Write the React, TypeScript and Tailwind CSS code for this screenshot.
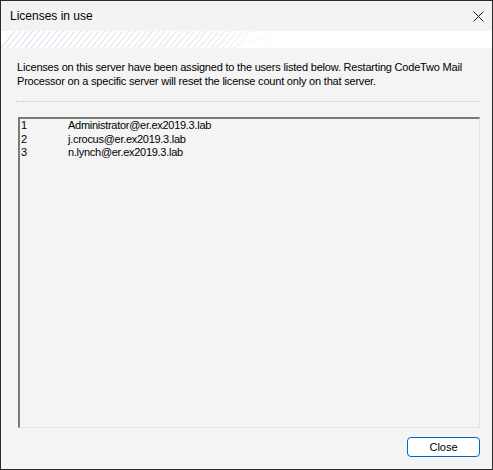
const users = [
  'Administrator@er.ex2019.3.lab',
  'j.crocus@er.ex2019.3.lab',
  'n.lynch@er.ex2019.3.lab',
];

function Banner() {
  const stripes = Array.from({ length: 40 }, (_, i) => i * 6);
  const arcs = Array.from({ length: 14 }, (_, i) => 60 + i * 9);
  return (
    <svg width="491" height="17" className="block shrink-0">
      <defs>
        <linearGradient id="fade" x1="0" x2="1" y1="0" y2="0">
          <stop offset="0" stopColor="#fff" stopOpacity="0" />
          <stop offset="0.45" stopColor="#fff" stopOpacity="0.4" />
          <stop offset="0.6" stopColor="#fff" stopOpacity="1" />
        </linearGradient>
      </defs>
      <rect width="491" height="17" fill="#ffffff" />
      {stripes.map((x) => (
        <line key={x} x1={x} y1={17} x2={x + 14} y2={0} stroke="#d8e0e8" strokeWidth="1.1" />
      ))}
      {arcs.map((r) => (
        <circle key={r} cx="280" cy="120" r={r} fill="none" stroke="#e6e9ec" strokeWidth="1" />
      ))}
      <rect width="491" height="17" fill="url(#fade)" />
    </svg>
  );
}

export default function App() {
  return (
    <div className="w-[493px] h-[470px] bg-[#f4f4f4] border border-[#2b2b2b] flex flex-col font-['Liberation_Sans',sans-serif] text-[11px] text-black">
      <div className="h-[30px] shrink-0 bg-[#f3f3f3] flex items-center justify-between pl-[9px] pr-[8px]">
        <span className="text-[12px] leading-none">Licenses in use</span>
        <svg width="11" height="11" viewBox="0 0 11 11">
          <path d="M0.5 0.5L10.5 10.5M10.5 0.5L0.5 10.5" stroke="#1a1a1a" strokeWidth="1" />
        </svg>
      </div>
      <Banner />
      <div className="flex-1 flex flex-col pl-[15px] pr-[12px] pt-[12px] pb-[12px]">
        <p className="pl-[1px] text-[11px] leading-[14px] tracking-[-0.2px]">
          Licenses on this server have been assigned to the users listed below. Restarting CodeTwo Mail Processor on a specific server will reset the license count only on that server.
        </p>
        <div className="mt-[13px] border-t border-dotted border-[#c8c8c8]" />
        <div className="mt-[15px] ml-[2px] flex-1 border-t-2 border-l-2 border-t-[#7a7a7a] border-l-[#7a7a7a] border-b border-r border-b-[#e3e3e3] border-r-[#e3e3e3] pl-[1px]">
          {users.map((u, i) => (
            <div key={u} className="flex leading-[13.5px] text-[11px] tracking-[-0.28px]">
              <span className="w-[47px]">{i + 1}</span>
              <span>{u}</span>
            </div>
          ))}
        </div>
        <div className="flex justify-end mt-[9px]">
          <button className="w-[73px] h-[20px] bg-white border border-[#0067c0] rounded-[4px] text-[11px] leading-none">
            Close
          </button>
        </div>
      </div>
    </div>
  );
}
